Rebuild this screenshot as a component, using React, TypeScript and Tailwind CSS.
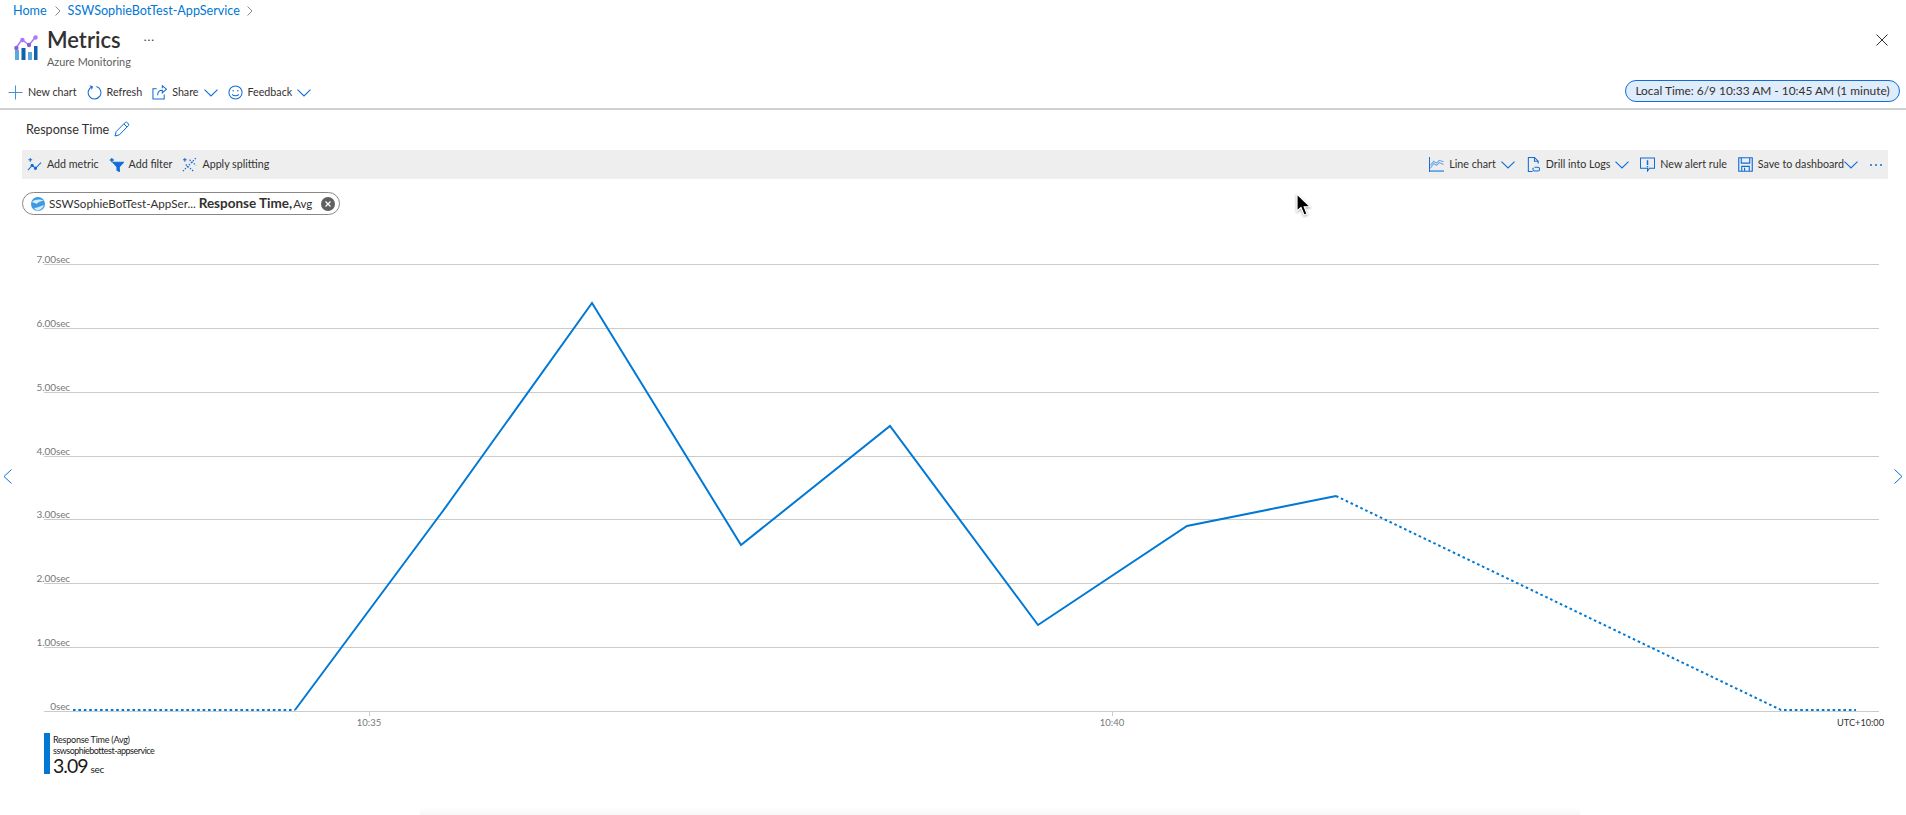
import type { ReactNode } from "react";

const BLUE = "#0f6cd8";

function Chevron({ className = "w-[14px] h-[8px]" }: { className?: string }) {
  return (
    <svg viewBox="0 0 14 8" className={className} fill="none" stroke={BLUE} strokeWidth="1.1">
      <path d="M0.5 0.7 L7 7 L13.5 0.7" />
    </svg>
  );
}

function Icon({ children }: { children: ReactNode }) {
  return (
    <svg viewBox="0 0 16 16" className="w-[15px] h-[15px] shrink-0" fill="none" stroke={BLUE} strokeWidth="1.1">
      {children}
    </svg>
  );
}

function MetricsLogo() {
  return (
    <svg viewBox="0 0 24 26" className="w-[24px] h-[26px] shrink-0">
      <rect x="1" y="15" width="4" height="10" fill="#5ea8e0" />
      <rect x="7.5" y="13" width="4" height="12" fill="#0f62ab" />
      <rect x="14" y="17" width="4" height="8" fill="#5ea8e0" />
      <rect x="20" y="11" width="3.5" height="14" fill="#0f62ab" />
      <path d="M2 13 L8 4.5 L15 10 L21.5 2" fill="none" stroke="#a67af4" strokeWidth="1.5" />
      <circle cx="2.4" cy="13" r="2.2" fill="#8c5fd8" />
      <circle cx="8.4" cy="5" r="2.2" fill="#a67af4" />
      <circle cx="15" cy="10" r="2.2" fill="#8c5fd8" />
      <circle cx="21.5" cy="2.5" r="2.2" fill="#a67af4" />
    </svg>
  );
}

function ToolButton({ icon, label, chevron, gap = "ml-[5px]" }: { icon: ReactNode; label: string; chevron?: boolean; gap?: string }) {
  return (
    <div className="flex items-center shrink-0">
      {icon}
      <span className="ml-[5px] pb-px text-[10.7px] leading-4 text-[#323130] whitespace-nowrap">{label}</span>
      {chevron && <span className={`${gap} flex`}><Chevron /></span>}
    </div>
  );
}

const yTicks = [
  { y: 264.5, label: "7.00sec" },
  { y: 328.5, label: "6.00sec" },
  { y: 392.5, label: "5.00sec" },
  { y: 456.5, label: "4.00sec" },
  { y: 519.5, label: "3.00sec" },
  { y: 583.5, label: "2.00sec" },
  { y: 647.5, label: "1.00sec" },
  { y: 711.5, label: "0sec" },
];

function Chart() {
  return (
    <svg viewBox="16 230 1874 500" className="w-[1874px] h-[500px] shrink-0">
      {yTicks.map((t) => (
        <g key={t.label}>
          <line x1="44" x2="1879" y1={t.y} y2={t.y} stroke="#cbcbcb" strokeWidth="1" />
          <text x="70" y={t.y - 2} textAnchor="end" fontSize="10" letterSpacing="-0.1" fill="#777">{t.label}</text>
        </g>
      ))}
      <line x1="369.5" x2="369.5" y1="712" y2="716" stroke="#cbcbcb" />
      <line x1="1112.5" x2="1112.5" y1="712" y2="716" stroke="#cbcbcb" />
      <text x="369" y="726" textAnchor="middle" fontSize="9.5" fill="#777">10:35</text>
      <text x="1112" y="726" textAnchor="middle" fontSize="9.5" fill="#777">10:40</text>
      <text x="1884" y="726" textAnchor="end" fontSize="9.2" fill="#323130">UTC+10:00</text>
      <polyline
        points="295,710 443.6,510 592,303 741,545 890,426 1038,625 1187,526 1336,496"
        fill="none"
        stroke="#0078d4"
        strokeWidth="2"
      />
      <polyline
        points="73,710 295,710"
        fill="none"
        stroke="#0078d4"
        strokeWidth="2"
        strokeDasharray="2.6 2.8"
      />
      <polyline
        points="1336,496 1781,710 1856,710"
        fill="none"
        stroke="#0078d4"
        strokeWidth="2"
        strokeDasharray="2.6 2.8"
      />
    </svg>
  );
}

export default function App() {
  return (
    <div className="relative w-[1906px] h-[815px] overflow-hidden bg-white font-['Lato',sans-serif] text-[#323130]">
      {/* Breadcrumb */}
      <div className="h-5 pl-[13px] pt-[2px] flex items-center text-[12.6px] text-[#0078d4]">
        <span>Home</span>
        <svg viewBox="0 0 6 10" className="w-[6px] h-[10px] ml-[8px] mr-[7px]" fill="none" stroke="#8a8886"><path d="M0.5 0.5 L5 5 L0.5 9.5" /></svg>
        <span>SSWSophieBotTest-AppService</span>
        <svg viewBox="0 0 6 10" className="w-[6px] h-[10px] ml-[7px]" fill="none" stroke="#8a8886"><path d="M0.5 0.5 L5 5 L0.5 9.5" /></svg>
      </div>

      {/* Blade header */}
      <div className="h-[57px] pl-[14px] pr-[18px] flex items-start">
        <div className="mt-[15px]"><MetricsLogo /></div>
        <div className="ml-[9px] mt-[6px]">
          <div className="flex items-center">
            <span className="text-[22px] leading-[28px] font-semibold">Metrics</span>
            <span className="ml-[23px] text-[12px] leading-none tracking-[1px] -mt-[6px]">...</span>
          </div>
          <div className="text-[10.9px] leading-4 text-[#605e5c]">Azure Monitoring</div>
        </div>
        <svg viewBox="0 0 12 12" className="w-3 h-3 ml-auto mt-[14px]" fill="none" stroke="#323130"><path d="M0.5 0.5 L11.5 11.5 M11.5 0.5 L0.5 11.5" /></svg>
      </div>

      {/* Command bar */}
      <div className="h-[33px] pl-[8px] pr-[6px] flex items-center gap-[10px] border-b-2 border-[#d0d0d0]">
        <ToolButton icon={<Icon><path d="M8 0.5 V15.5 M0.5 8 H15.5" stroke="#4a90e2" /></Icon>} label="New chart" />
        <ToolButton icon={<Icon><path d="M5.5 1.8 A6.8 6.8 0 1 0 10 1.6 M3 0.8 L5.8 2 L4.8 4.6" /></Icon>} label="Refresh" />
        <ToolButton
          icon={<Icon><path d="M5 4 H1 V15 H13 V10 M6 11 C6 7 8 5.5 11 5.5 V8.5 L15.5 4.5 L11 0.8 V3.5" /></Icon>}
          label="Share"
          chevron
        />
        <ToolButton
          icon={<Icon><circle cx="8" cy="8" r="7" /><circle cx="5.5" cy="6" r="0.8" fill={BLUE} stroke="none" /><circle cx="10.5" cy="6" r="0.8" fill={BLUE} stroke="none" /><path d="M4.5 10 C6 12 10 12 11.5 10" /></Icon>}
          label="Feedback"
          chevron
        />
        <div className="ml-auto h-[22px] w-[275px] flex items-center justify-center rounded-full border border-[#0f6cd8] bg-[#deecfb] text-[11.9px] leading-none whitespace-nowrap mb-[3px]">
          Local Time: 6/9 10:33 AM - 10:45 AM (1 minute)
        </div>
      </div>

      {/* Chart title */}
      <div className="h-[40px] pl-[26px] flex items-center text-[12.6px]">
        <span>Response Time</span>
        <svg viewBox="0 0 16 16" className="w-4 h-4 ml-[5px] -mt-[3px]" fill="none" stroke={BLUE}><path d="M1 15 L2.2 10.5 L11.5 1.2 C12.5 0.4 15.5 3.2 14.6 4.4 L5.4 13.8 Z M10 3 L13 6" /></svg>
      </div>

      {/* Chart toolbar */}
      <div className="h-[29px] mx-[22px] w-[1866px] bg-[#eeeeee] pl-[5px] pr-[6px] flex items-center gap-[10px]">
        <ToolButton
          icon={<Icon><path d="M3.5 1 V5 M1.5 3 H5.5 M1 14 L5.5 9 L9 12 L15 6" /><circle cx="5.5" cy="9" r="1.2" fill={BLUE} /><circle cx="9" cy="12" r="1.2" fill={BLUE} /></Icon>}
          label="Add metric"
        />
        <ToolButton
          icon={<Icon><path d="M3 1 V5.5 M0.8 3.2 H5.2" strokeWidth="1.4" /><path d="M4 5.5 H15.5 L11 10.5 V15.5 L8.5 14 V10.5 Z" fill={BLUE} /></Icon>}
          label="Add filter"
        />
        <ToolButton
          icon={<Icon><path d="M3 1 V5 M1 3 H5" /><path d="M1 15 L8 8 L15 1 M4 8 L12 15 M8 3 L15 9" strokeDasharray="1.5 1.5" strokeWidth="1.3" /></Icon>}
          label="Apply splitting"
        />
        <div className="ml-auto flex items-center gap-[11px]">
          <ToolButton
            icon={<Icon><path d="M0.5 0 V15.5 H16" /><path d="M1 15 H16" strokeWidth="2" stroke="#6aa6ea" /><path d="M1.5 12 L5 7 L8 9 L11 6 L15.5 8 M1.5 9 L5 4.5 L8 6.5 L11 3.5 L15.5 5" stroke="#6aa6ea" /></Icon>}
            label="Line chart"
            chevron
          />
          <ToolButton
            icon={<Icon><path d="M7 15.5 H2.5 V0.5 H9 L13 4.5 V7 M9 0.5 V4.5 H13" /><path d="M9 11 H12.5 A2 2 0 0 1 12.5 15 H9 A2 2 0 0 1 8 11.5" /></Icon>}
            label="Drill into Logs"
            chevron
          />
          <ToolButton
            icon={<Icon><path d="M0.5 1 H15.5 V12 H10 L8 15 V12 H0.5 Z" /><path d="M8 3.5 V8.5 M8 9.5 V11" strokeWidth="1.6" /></Icon>}
            label="New alert rule"
          />
          <ToolButton
            icon={<Icon><path d="M0.8 0.8 H15.2 V15.2 H0.8 Z M3.5 0.8 V6.5 H12.5 V0.8 M4 15.2 V10 H12 V15.2 M7 11.5 V15" strokeWidth="1.2" /></Icon>}
            label="Save to dashboard"
            chevron
            gap="ml-0"
          />
          <div className="flex gap-[3px] ml-px">
            <span className="w-[2px] h-[2px] rounded-full bg-[#0f6cd8]" />
            <span className="w-[2px] h-[2px] rounded-full bg-[#0f6cd8]" />
            <span className="w-[2px] h-[2px] rounded-full bg-[#0f6cd8]" />
          </div>
        </div>
      </div>

      {/* Metric chip */}
      <div className="pl-[22px] pt-[13px]">
        <div className="w-[318px] h-[23px] rounded-full border border-[#8a8886] pl-[8px] flex items-center text-[11.65px] whitespace-nowrap">
          <svg viewBox="0 0 14 14" className="w-[14px] h-[14px] shrink-0">
            <circle cx="7" cy="7" r="7" fill="#3b9ae0" />
            <path d="M1 5 C4 2 9 2 13 3.5 C10 4 7 5 5.5 7 C4 6 2 5.5 1 5 Z M3 11 C6 11 9 9 13 8 C12 11 9 13.5 6 13.5 C5 13 4 12 3 11 Z" fill="#d6ecfa" />
          </svg>
          <span className="ml-[4px]">SSWSophieBotTest-AppSer...</span>
          <span className="ml-[3px] text-[13.5px] font-bold">Response Time,</span>
          <span className="ml-[1px] text-[11.5px]">Avg</span>
          <span className="ml-auto mr-[4px] w-[14px] h-[14px] rounded-full bg-[#5f5f5f] flex items-center justify-center">
            <svg viewBox="0 0 6 6" className="w-[6px] h-[6px]" fill="none" stroke="#fff" strokeWidth="1.2"><path d="M0.5 0.5 L5.5 5.5 M5.5 0.5 L0.5 5.5" /></svg>
          </span>
        </div>
      </div>

      {/* Chart with side arrows */}
      <div className="mt-[15px] flex items-start">
        <div className="w-4 shrink-0 pt-[239px] pl-[3px]">
          <svg viewBox="0 0 9 15" className="w-[9px] h-[15px]" fill="none" stroke={BLUE}><path d="M8.5 0.5 L1 7.5 L8.5 14.5" /></svg>
        </div>
        <Chart />
        <div className="w-4 shrink-0 pt-[239px] pl-[4px]">
          <svg viewBox="0 0 9 15" className="w-[9px] h-[15px]" fill="none" stroke={BLUE}><path d="M0.5 0.5 L8 7.5 L0.5 14.5" /></svg>
        </div>
      </div>

      {/* Legend */}
      <div className="ml-[44px] mt-[3px] flex">
        <div className="w-[6px] h-[41px] bg-[#0078d4]" />
        <div className="ml-[3px] text-[#1b1a19]">
          <div className="text-[9px] leading-[11px] tracking-[-0.25px] mt-[1px]">Response Time (Avg)</div>
          <div className="text-[9px] leading-[11px] tracking-[-0.5px]">sswsophiebottest-appservice</div>
          <div className="flex items-baseline leading-[20px]">
            <span className="text-[19.5px] leading-[20px] tracking-[-1px]">3.09</span>
            <span className="ml-[3px] text-[10px] tracking-[-0.3px]">sec</span>
          </div>
        </div>
      </div>

      {/* Mouse pointer */}
      <svg viewBox="0 0 16 26" className="absolute left-[1296px] top-[193px] w-[16px] h-[26px] drop-shadow-[0_1px_1px_rgba(0,0,0,0.35)]">
        <path d="M1 1 L1 18 L5 14.5 L8 22 L11 21 L8.2 13.8 L14 13.5 Z" fill="#000" stroke="#fff" strokeWidth="1.2" />
      </svg>

      {/* Faint shadow along the bottom edge */}
      <div className="absolute bottom-0 left-[420px] w-[1160px] h-[8px] bg-linear-to-t from-[#f7f7f7] to-white" />
    </div>
  );
}
